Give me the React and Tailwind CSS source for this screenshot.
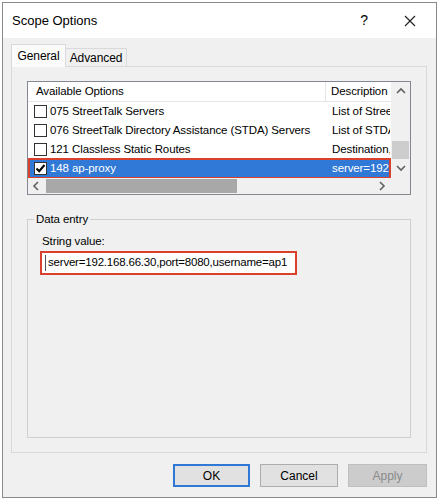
import React from 'react'

const rows = [
  { name: '075 StreetTalk Servers', desc: 'List of StreetTalk servers', checked: false },
  { name: '076 StreetTalk Directory Assistance (STDA) Servers', desc: 'List of STDA servers', checked: false },
  { name: '121 Classless Static Routes', desc: 'Destination, mask and router', checked: false },
  { name: '148 ap-proxy', desc: 'server=192.168.66.30', checked: true, selected: true },
]

function CheckBox({ checked }) {
  return (
    <span className="w-[13px] h-[13px] border border-[#333] bg-white flex items-center justify-center shrink-0">
      {checked && (
        <svg width="11" height="11" viewBox="0 0 11 11">
          <path d="M1.5 5.5 L4.2 8.2 L9.5 2" fill="none" stroke="#000" strokeWidth="2" />
        </svg>
      )}
    </span>
  )
}

function Chevron({ dir }) {
  const paths = {
    up: 'M1 6 L5 2 L9 6',
    down: 'M1 2 L5 6 L9 2',
    left: 'M6 1 L2 5 L6 9',
    right: 'M3 1 L7 5 L3 9',
  }
  return (
    <svg width="10" height="10" viewBox="0 0 10 10">
      <path d={paths[dir]} fill="none" stroke="#606060" strokeWidth="1.6" />
    </svg>
  )
}

export default function App() {
  return (
    <div className="w-[439px] h-[500px] bg-white p-[2px] font-['Liberation_Sans',Arial,sans-serif] text-[11.5px] tracking-[-0.1px] text-black">
      <div className="h-[496px] border border-[#8a8a8a] bg-[#f0f0f0] flex flex-col">
        {/* title bar */}
        <div className="h-[35px] bg-white flex items-center pl-[9px] pr-[20px] shrink-0">
          <span className="text-[13px] tracking-normal">Scope Options</span>
          <span className="ml-auto text-[14px] mr-[36px]">?</span>
          <svg width="12" height="12" viewBox="0 0 12 12">
            <path d="M1 1 L11 11 M11 1 L1 11" stroke="#222" strokeWidth="1.2" />
          </svg>
        </div>

        <div className="pl-[8px] pr-[9px] pt-[5px] flex flex-col">
          {/* tabs */}
          <div className="flex items-end h-[23px] text-[12px]">
            <div className="w-[55px] h-[23px] border border-b-0 border-[#d9d9d9] bg-[#fbfbfb] flex items-center justify-center relative top-[1px]">
              General
            </div>
            <div className="w-[61px] h-[18px] border border-b-0 border-l-0 border-[#d9d9d9] bg-[#f0f0f0] flex items-center justify-center">
              Advanced
            </div>
          </div>

          {/* tab page */}
          <div className="h-[387px] border border-[#d9d9d9] pl-[15px] pr-[14px] pt-[14px]">
            {/* list view */}
            <div className="w-[384px] h-[114px] border border-[#828790] bg-white flex flex-col">
              <div className="flex flex-1 min-h-0">
                <div className="flex-1 min-w-0 flex flex-col">
                  <div className="h-[20px] flex border-b border-[#e5e5e5] shrink-0">
                    <div className="w-[298px] pl-[8px] flex items-center border-r border-[#e5e5e5]">Available Options</div>
                    <div className="flex-1 pl-[5px] flex items-center whitespace-nowrap overflow-hidden">Description</div>
                  </div>
                  {rows.map((r) => (
                    <div key={r.name} className={r.selected ? 'h-[19px] flex items-center outline-2 outline-[#d9412c] -outline-offset-1 mx-[1px] bg-[#3179d6] text-white' : 'h-[19px] flex items-center mx-[1px]'}>
                      <div className="w-[298px] pl-[5px] flex items-center gap-[3px] whitespace-nowrap overflow-hidden">
                        <CheckBox checked={r.checked} />
                        <span>{r.name}</span>
                      </div>
                      <div className="flex-1 pl-[5px] whitespace-nowrap overflow-hidden">{r.desc}</div>
                    </div>
                  ))}
                </div>
                {/* vertical scrollbar */}
                <div className="w-[19px] bg-[#f0f0f0] flex flex-col items-center">
                  <div className="h-[20px] flex items-center justify-center"><Chevron dir="up" /></div>
                  <div className="flex-1 w-full flex flex-col pt-[39px] px-[1px]">
                    <div className="h-[18px] bg-[#cdcdcd]" />
                  </div>
                  <div className="h-[19px] flex items-center justify-center"><Chevron dir="down" /></div>
                </div>
              </div>
              {/* horizontal scrollbar */}
              <div className="h-[16px] flex shrink-0">
                <div className="flex-1 bg-[#f0f0f0] flex items-center">
                  <div className="w-[18px] flex justify-center"><Chevron dir="left" /></div>
                  <div className="w-[191px] h-[14px] bg-[#a8a8a8]" />
                  <div className="ml-auto w-[18px] flex justify-center"><Chevron dir="right" /></div>
                </div>
                <div className="w-[19px] bg-[#f0f0f0]" />
              </div>
            </div>

            {/* data entry group */}
            <fieldset className="mt-[17px] w-[384px] h-[226px] border border-[#cfcfcf]">
              <legend className="ml-[6px] px-[2px] leading-[15px]">Data entry</legend>
              <div className="pl-[12px]">
                <div className="mt-[7px] pl-[2px] leading-[15px]">String value:</div>
                <div className="mt-[2px] w-[257px] h-[24px] border-2 border-[#d9412c] bg-white flex items-center pl-[3px] overflow-hidden">
                  <span className="w-[1px] h-[16px] bg-[#555] mr-[2px] shrink-0" />
                  <span className="whitespace-nowrap tracking-[-0.2px]">server=192.168.66.30,port=8080,username=ap1</span>
                </div>
              </div>
            </fieldset>
          </div>

          {/* buttons */}
          <div className="flex justify-end gap-[10px] mt-[11px] text-[12px] tracking-normal">
            <button className="w-[77px] h-[23px] bg-[#e1e1e1] border-2 border-[#2f78d4]">OK</button>
            <button className="w-[78px] h-[23px] bg-[#e1e1e1] border border-[#adadad]">Cancel</button>
            <button className="w-[79px] h-[23px] bg-[#cccccc] border border-[#bfbfbf] text-[#8a8a8a]">Apply</button>
          </div>
        </div>
      </div>
    </div>
  )
}
